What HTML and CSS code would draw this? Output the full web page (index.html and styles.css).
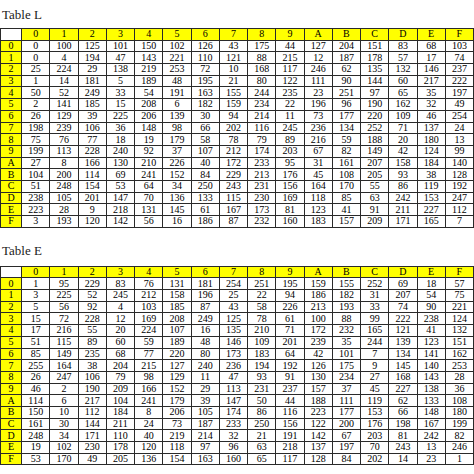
FILE: index.html
```html
<!DOCTYPE html>
<html>
<head>
<meta charset="utf-8">
<link rel="stylesheet" href="styles.css">
</head>
<body>
<div class="title title-l">Table L</div>
<table class="grid grid-l">
<colgroup><col class="c-lab"><col span="16" class="c-val"></colgroup>
<tr class="hd"><th class="corner"></th><th>0</th><th>1</th><th>2</th><th>3</th><th>4</th><th>5</th><th>6</th><th>7</th><th>8</th><th>9</th><th>A</th><th>B</th><th>C</th><th>D</th><th>E</th><th>F</th></tr>
<tr><th>0</th><td>0</td><td>100</td><td>125</td><td>101</td><td>150</td><td>102</td><td>126</td><td>43</td><td>175</td><td>44</td><td>127</td><td>204</td><td>151</td><td>83</td><td>68</td><td>103</td></tr>
<tr><th>1</th><td>0</td><td>4</td><td>194</td><td>47</td><td>143</td><td>221</td><td>110</td><td>121</td><td>88</td><td>215</td><td>12</td><td>187</td><td>178</td><td>57</td><td>17</td><td>74</td></tr>
<tr><th>2</th><td>25</td><td>224</td><td>29</td><td>138</td><td>219</td><td>253</td><td>72</td><td>10</td><td>168</td><td>117</td><td>246</td><td>62</td><td>135</td><td>132</td><td>146</td><td>237</td></tr>
<tr><th>3</th><td>1</td><td>14</td><td>181</td><td>5</td><td>189</td><td>48</td><td>195</td><td>21</td><td>80</td><td>122</td><td>111</td><td>90</td><td>144</td><td>60</td><td>217</td><td>222</td></tr>
<tr><th>4</th><td>50</td><td>52</td><td>249</td><td>33</td><td>54</td><td>191</td><td>163</td><td>155</td><td>244</td><td>235</td><td>23</td><td>251</td><td>97</td><td>65</td><td>35</td><td>197</td></tr>
<tr><th>5</th><td>2</td><td>141</td><td>185</td><td>15</td><td>208</td><td>6</td><td>182</td><td>159</td><td>234</td><td>22</td><td>196</td><td>96</td><td>190</td><td>162</td><td>32</td><td>49</td></tr>
<tr><th>6</th><td>26</td><td>129</td><td>39</td><td>225</td><td>206</td><td>139</td><td>30</td><td>94</td><td>214</td><td>11</td><td>73</td><td>177</td><td>220</td><td>109</td><td>46</td><td>254</td></tr>
<tr><th>7</th><td>198</td><td>239</td><td>106</td><td>36</td><td>148</td><td>98</td><td>66</td><td>202</td><td>116</td><td>245</td><td>236</td><td>134</td><td>252</td><td>71</td><td>137</td><td>24</td></tr>
<tr><th>8</th><td>75</td><td>76</td><td>77</td><td>18</td><td>19</td><td>179</td><td>58</td><td>78</td><td>79</td><td>89</td><td>216</td><td>59</td><td>188</td><td>20</td><td>180</td><td>13</td></tr>
<tr><th>9</th><td>199</td><td>113</td><td>228</td><td>240</td><td>92</td><td>37</td><td>107</td><td>212</td><td>174</td><td>203</td><td>67</td><td>82</td><td>149</td><td>42</td><td>124</td><td>99</td></tr>
<tr><th>A</th><td>27</td><td>8</td><td>166</td><td>130</td><td>210</td><td>226</td><td>40</td><td>172</td><td>233</td><td>95</td><td>31</td><td>161</td><td>207</td><td>158</td><td>184</td><td>140</td></tr>
<tr><th>B</th><td>104</td><td>200</td><td>114</td><td>69</td><td>241</td><td>152</td><td>84</td><td>229</td><td>213</td><td>176</td><td>45</td><td>108</td><td>205</td><td>93</td><td>38</td><td>128</td></tr>
<tr><th>C</th><td>51</td><td>248</td><td>154</td><td>53</td><td>64</td><td>34</td><td>250</td><td>243</td><td>231</td><td>156</td><td>164</td><td>170</td><td>55</td><td>86</td><td>119</td><td>192</td></tr>
<tr><th>D</th><td>238</td><td>105</td><td>201</td><td>147</td><td>70</td><td>136</td><td>133</td><td>115</td><td>230</td><td>169</td><td>118</td><td>85</td><td>63</td><td>242</td><td>153</td><td>247</td></tr>
<tr><th>E</th><td>223</td><td>28</td><td>9</td><td>218</td><td>131</td><td>145</td><td>61</td><td>167</td><td>173</td><td>81</td><td>123</td><td>41</td><td>91</td><td>211</td><td>227</td><td>112</td></tr>
<tr><th>F</th><td>3</td><td>193</td><td>120</td><td>142</td><td>56</td><td>16</td><td>186</td><td>87</td><td>232</td><td>160</td><td>183</td><td>157</td><td>209</td><td>171</td><td>165</td><td>7</td></tr>
</table>
<div class="title title-e">Table E</div>
<table class="grid grid-e">
<colgroup><col class="c-lab"><col span="16" class="c-val"></colgroup>
<tr class="hd"><th class="corner"></th><th>0</th><th>1</th><th>2</th><th>3</th><th>4</th><th>5</th><th>6</th><th>7</th><th>8</th><th>9</th><th>A</th><th>B</th><th>C</th><th>D</th><th>E</th><th>F</th></tr>
<tr><th>0</th><td>1</td><td>95</td><td>229</td><td>83</td><td>76</td><td>131</td><td>181</td><td>254</td><td>251</td><td>195</td><td>159</td><td>155</td><td>252</td><td>69</td><td>18</td><td>57</td></tr>
<tr><th>1</th><td>3</td><td>225</td><td>52</td><td>245</td><td>212</td><td>158</td><td>196</td><td>25</td><td>22</td><td>94</td><td>186</td><td>182</td><td>31</td><td>207</td><td>54</td><td>75</td></tr>
<tr><th>2</th><td>5</td><td>56</td><td>92</td><td>4</td><td>103</td><td>185</td><td>87</td><td>43</td><td>58</td><td>226</td><td>213</td><td>193</td><td>33</td><td>74</td><td>90</td><td>221</td></tr>
<tr><th>3</th><td>15</td><td>72</td><td>228</td><td>12</td><td>169</td><td>208</td><td>249</td><td>125</td><td>78</td><td>61</td><td>100</td><td>88</td><td>99</td><td>222</td><td>238</td><td>124</td></tr>
<tr><th>4</th><td>17</td><td>216</td><td>55</td><td>20</td><td>224</td><td>107</td><td>16</td><td>135</td><td>210</td><td>71</td><td>172</td><td>232</td><td>165</td><td>121</td><td>41</td><td>132</td></tr>
<tr><th>5</th><td>51</td><td>115</td><td>89</td><td>60</td><td>59</td><td>189</td><td>48</td><td>146</td><td>109</td><td>201</td><td>239</td><td>35</td><td>244</td><td>139</td><td>123</td><td>151</td></tr>
<tr><th>6</th><td>85</td><td>149</td><td>235</td><td>68</td><td>77</td><td>220</td><td>80</td><td>173</td><td>183</td><td>64</td><td>42</td><td>101</td><td>7</td><td>134</td><td>141</td><td>162</td></tr>
<tr><th>7</th><td>255</td><td>164</td><td>38</td><td>204</td><td>215</td><td>127</td><td>240</td><td>236</td><td>194</td><td>192</td><td>126</td><td>175</td><td>9</td><td>145</td><td>140</td><td>253</td></tr>
<tr><th>8</th><td>26</td><td>247</td><td>106</td><td>79</td><td>98</td><td>129</td><td>11</td><td>47</td><td>93</td><td>91</td><td>130</td><td>234</td><td>27</td><td>168</td><td>143</td><td>28</td></tr>
<tr><th>9</th><td>46</td><td>2</td><td>190</td><td>209</td><td>166</td><td>152</td><td>29</td><td>113</td><td>231</td><td>237</td><td>157</td><td>37</td><td>45</td><td>227</td><td>138</td><td>36</td></tr>
<tr><th>A</th><td>114</td><td>6</td><td>217</td><td>104</td><td>241</td><td>179</td><td>39</td><td>147</td><td>50</td><td>44</td><td>188</td><td>111</td><td>119</td><td>62</td><td>133</td><td>108</td></tr>
<tr><th>B</th><td>150</td><td>10</td><td>112</td><td>184</td><td>8</td><td>206</td><td>105</td><td>174</td><td>86</td><td>116</td><td>223</td><td>177</td><td>153</td><td>66</td><td>148</td><td>180</td></tr>
<tr><th>C</th><td>161</td><td>30</td><td>144</td><td>211</td><td>24</td><td>73</td><td>187</td><td>233</td><td>250</td><td>156</td><td>122</td><td>200</td><td>176</td><td>198</td><td>167</td><td>199</td></tr>
<tr><th>D</th><td>248</td><td>34</td><td>171</td><td>110</td><td>40</td><td>219</td><td>214</td><td>32</td><td>21</td><td>191</td><td>142</td><td>67</td><td>203</td><td>81</td><td>242</td><td>82</td></tr>
<tr><th>E</th><td>19</td><td>102</td><td>230</td><td>178</td><td>120</td><td>118</td><td>97</td><td>96</td><td>63</td><td>218</td><td>137</td><td>197</td><td>70</td><td>243</td><td>13</td><td>246</td></tr>
<tr><th>F</th><td>53</td><td>170</td><td>49</td><td>205</td><td>136</td><td>154</td><td>163</td><td>160</td><td>65</td><td>117</td><td>128</td><td>84</td><td>202</td><td>14</td><td>23</td><td>1</td></tr>
</table>
</body>
</html>
```
FILE: styles.css
```css
html, body {
  margin: 0;
  padding: 0;
  background: #ffffff;
}

body {
  width: 474px;
  font-family: "Liberation Serif", "Times New Roman", serif;
  color: #000000;
}

.title {
  font-size: 13px;
  line-height: 15px;
  padding-left: 2px;
  color: #1a1a1a;
}

.title-l {
  padding-top: 7px;
  padding-bottom: 6px;
}

.title-e {
  padding-top: 15px;
  padding-bottom: 8px;
}

.grid {
  width: 474px;
  table-layout: fixed;
  border-collapse: collapse;
  font-size: 10px;
}

.c-lab {
  width: 21px;
}

.grid tr {
  height: 11.7px;
}

.grid td,
.grid th {
  padding: 0;
  line-height: 10px;
  text-align: center;
  border: 1px solid #2a2a2a;
  font-weight: normal;
  white-space: nowrap;
  overflow: hidden;
}

.grid th {
  background: #ffff00;
}

.grid th.corner {
  background: #ffffff;
}
```
